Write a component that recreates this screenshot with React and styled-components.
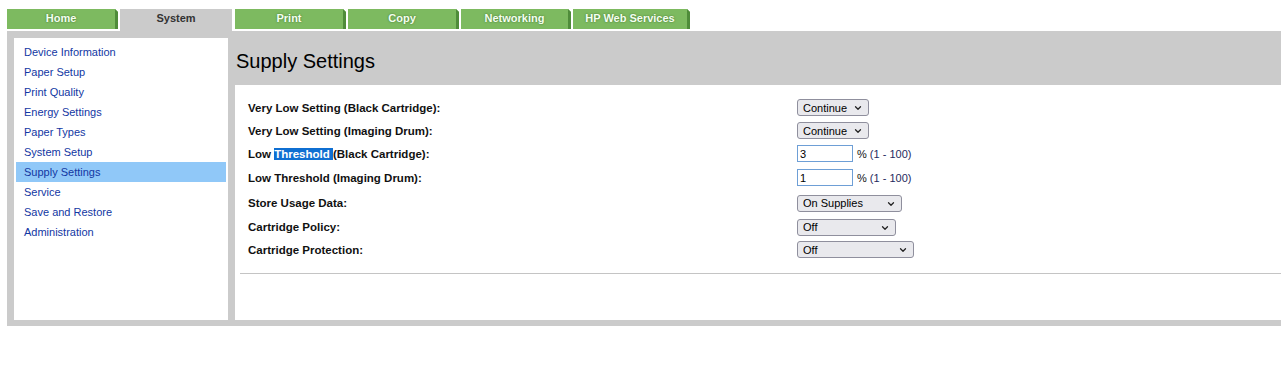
import React from 'react';
import styled, { createGlobalStyle } from 'styled-components';
import { ChevronDown } from 'lucide-react';

const GlobalStyle = createGlobalStyle`
  body {
    margin: 0;
    background: #fff;
    font-family: "Liberation Sans", Arial, sans-serif;
  }
`;

const Page = styled.div`
  padding: 9px 0 0 7px;
  width: 1274px;
`;

const TabBar = styled.div`
  display: flex;
  align-items: flex-start;
  height: 22px;
`;

const Tab = styled.div`
  box-sizing: border-box;
  width: ${p => p.width}px;
  margin-right: ${p => p.gap}px;
  height: ${p => (p.active ? 22 : 20)}px;
  line-height: 19px;
  text-align: center;
  font-size: 11px;
  font-weight: bold;
  cursor: pointer;
  background: ${p => (p.active ? '#cbcbcb' : '#7dba60')};
  color: ${p => (p.active ? '#333' : '#f4fff0')};
  text-shadow: ${p => (p.active ? 'none' : '0 0 2px #3d6e2c')};
  border-right: ${p => (p.active ? '0' : '3px solid #4f8c3a')};
  clip-path: ${p => (p.active ? 'none' : 'polygon(0 0, calc(100% - 3px) 0, 100% 3px, 100% 100%, 0 100%)')};
`;

const Frame = styled.div`
  display: flex;
  gap: 7px;
  background: #cbcbcb;
  padding: 7px 0 6px 7px;
`;

const SideNav = styled.ul`
  list-style: none;
  margin: 0;
  padding: 4px 2px 0;
  width: 214px;
  box-sizing: border-box;
  height: 282px;
  background: #fff;
`;

const NavItem = styled.li`
  height: 20px;
  line-height: 20px;
  padding-left: 8px;
  font-size: 11px;
  color: #1237a3;
  cursor: pointer;
  background: ${p => (p.selected ? '#90c8f8' : 'transparent')};
`;

const Main = styled.div`
  flex: 1;
  display: flex;
  flex-direction: column;
`;

const Title = styled.h1`
  margin: 0;
  height: 47px;
  line-height: 47px;
  padding-left: 1px;
  font-size: 20px;
  font-weight: normal;
  color: #000;
`;

const Content = styled.div`
  flex: 1;
  background: #fff;
  padding-top: 11px;
`;

const Form = styled.div`
  display: grid;
  grid-template-columns: 549px auto;
  padding-left: 13px;
`;

const Label = styled.div`
  height: ${p => p.h}px;
  display: flex;
  align-items: center;
  font-size: 11.5px;
  font-weight: bold;
  color: #111;
  white-space: pre;
`;

const Cell = styled.div`
  height: ${p => p.h}px;
  display: flex;
  align-items: center;
  font-size: 11px;
  color: #111;
`;

const Selected = styled.span`
  background: #0f6fd2;
  color: #fff;
`;

const SelectWrap = styled.span`
  position: relative;
  display: inline-flex;
  width: ${p => p.width}px;
`;

const Select = styled.select`
  appearance: none;
  width: 100%;
  height: 17px;
  box-sizing: border-box;
  padding: 0 0 0 5px;
  font-family: "Liberation Sans", Arial, sans-serif;
  font-size: 11px;
  color: #000;
  background: #e9e9ed;
  border: 1px solid #8f8f9d;
  border-radius: 3px;
`;

const Chevron = styled(ChevronDown)`
  position: absolute;
  right: 6px;
  top: 4px;
  pointer-events: none;
`;

const NumInput = styled.input`
  width: 56px;
  height: 17px;
  box-sizing: border-box;
  padding: 0 0 0 2px;
  font-family: "Liberation Sans", Arial, sans-serif;
  font-size: 11px;
  color: #000;
  border: 1px solid #6e9fd6;
  outline: none;
`;

const Range = styled.span`
  margin-left: 4px;
  color: #111;
  span { color: #1f2a5e; }
`;

const Divider = styled.hr`
  margin: 12px 0 0 5px;
  border: 0;
  border-top: 1px solid #c4c4c4;
`;

const tabs = [
  { name: 'Home', width: 111, gap: 2 },
  { name: 'System', width: 112, gap: 3, active: true },
  { name: 'Print', width: 111, gap: 2 },
  { name: 'Copy', width: 111, gap: 2 },
  { name: 'Networking', width: 110, gap: 2 },
  { name: 'HP Web Services', width: 117, gap: 0 },
];

const navItems = [
  'Device Information', 'Paper Setup', 'Print Quality', 'Energy Settings',
  'Paper Types', 'System Setup', 'Supply Settings', 'Service',
  'Save and Restore', 'Administration',
];

function Dropdown({ width, value, options }) {
  return (
    <SelectWrap width={width}>
      <Select defaultValue={value}>
        {options.map(o => <option key={o}>{o}</option>)}
      </Select>
      <Chevron size={10} strokeWidth={3} color="#222" />
    </SelectWrap>
  );
}

function Percent({ value }) {
  return (
    <>
      <NumInput defaultValue={value} />
      <Range>% <span>(1 - 100)</span></Range>
    </>
  );
}

export default function App() {
  return (
    <Page>
      <GlobalStyle />
      <TabBar>
        {tabs.map(t => (
          <Tab key={t.name} width={t.width} gap={t.gap} active={t.active}>{t.name}</Tab>
        ))}
      </TabBar>
      <Frame>
        <SideNav>
          {navItems.map(n => (
            <NavItem key={n} selected={n === 'Supply Settings'}>{n}</NavItem>
          ))}
        </SideNav>
        <Main>
          <Title>Supply Settings</Title>
          <Content>
            <Form>
              <Label h={23}>Very Low Setting (Black Cartridge):</Label>
              <Cell h={23}><Dropdown width={72} value="Continue" options={['Stop', 'Continue']} /></Cell>
              <Label h={23}>Very Low Setting (Imaging Drum):</Label>
              <Cell h={23}><Dropdown width={72} value="Continue" options={['Stop', 'Continue']} /></Cell>
              <Label h={23}>Low <Selected>Threshold </Selected>(Black Cartridge):</Label>
              <Cell h={23}><Percent value="3" /></Cell>
              <Label h={25}>Low Threshold (Imaging Drum):</Label>
              <Cell h={25}><Percent value="1" /></Cell>
              <Label h={26}>Store Usage Data:</Label>
              <Cell h={26}><Dropdown width={105} value="On Supplies" options={['On Supplies', 'On Printer']} /></Cell>
              <Label h={22}>Cartridge Policy:</Label>
              <Cell h={22}><Dropdown width={99} value="Off" options={['Off', 'Authorized HP']} /></Cell>
              <Label h={23}>Cartridge Protection:</Label>
              <Cell h={23}><Dropdown width={117} value="Off" options={['Off', 'Protect Cartridges']} /></Cell>
            </Form>
            <Divider />
          </Content>
        </Main>
      </Frame>
    </Page>
  );
}
